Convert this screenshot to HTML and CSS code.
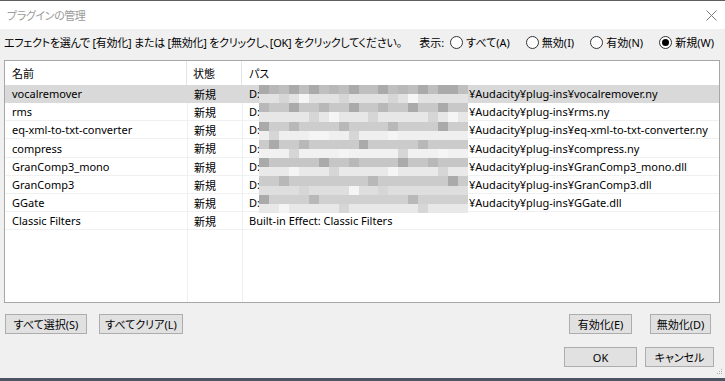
FILE: index.html
```html
<!DOCTYPE html>
<html lang="ja">
<head>
<meta charset="utf-8">
<title>プラグインの管理</title>
<link rel="stylesheet" href="styles.css">
</head>
<body>
<div class="window">
  <div class="titlebar">
    <span class="title">プラグインの管理</span>
    <svg class="close" width="11" height="11" viewBox="0 0 11 11"><path d="M0.5 0.5 L10.5 10.5 M10.5 0.5 L0.5 10.5" stroke="#7a7a7a" stroke-width="1" fill="none"/></svg>
  </div>
  <div class="content">
    <div class="topbar">
      <span class="hint">エフェクトを選んで [有効化] または [無効化] をクリックし、[OK] をクリックしてください。</span>
      <div class="filter">
        <span class="flabel">表示:</span>
        <span class="radio"><span class="circle"></span>すべて(A)</span>
        <span class="radio"><span class="circle"></span>無効(I)</span>
        <span class="radio"><span class="circle"></span>有効(N)</span>
        <span class="radio on"><span class="circle"></span>新規(W)</span>
      </div>
    </div>
    <div class="list">
      <div class="row head"><div class="c name">名前</div><div class="c state">状態</div><div class="c path">パス</div></div>
      <div class="row sel"><div class="c name">vocalremover</div><div class="c state">新規</div><div class="c path"><span class="drive">D:</span>¥Audacity¥plug-ins¥vocalremover.ny</div></div>
      <div class="row"><div class="c name">rms</div><div class="c state">新規</div><div class="c path"><span class="drive">D:</span>¥Audacity¥plug-ins¥rms.ny</div></div>
      <div class="row"><div class="c name">eq-xml-to-txt-converter</div><div class="c state">新規</div><div class="c path"><span class="drive">D:</span>¥Audacity¥plug-ins¥eq-xml-to-txt-converter.ny</div></div>
      <div class="row tall"><div class="c name">compress</div><div class="c state">新規</div><div class="c path"><span class="drive">D:</span>¥Audacity¥plug-ins¥compress.ny</div></div>
      <div class="row"><div class="c name">GranComp3_mono</div><div class="c state">新規</div><div class="c path"><span class="drive">D:</span>¥Audacity¥plug-ins¥GranComp3_mono.dll</div></div>
      <div class="row"><div class="c name">GranComp3</div><div class="c state">新規</div><div class="c path"><span class="drive">D:</span>¥Audacity¥plug-ins¥GranComp3.dll</div></div>
      <div class="row"><div class="c name">GGate</div><div class="c state">新規</div><div class="c path"><span class="drive">D:</span>¥Audacity¥plug-ins¥GGate.dll</div></div>
      <div class="row"><div class="c name">Classic Filters</div><div class="c state">新規</div><div class="c path">Built-in Effect: Classic Filters</div></div>
      <svg class="mosaic" width="209" height="128" viewBox="0 0 21 14" preserveAspectRatio="none" shape-rendering="crispEdges">
        <rect x="0" y="0" width="21" height="1" fill="#bfbfbf"/>
        <rect x="0" y="1" width="21" height="1" fill="#e2e2e2"/>
        <rect x="0" y="2" width="21" height="1" fill="#c8c8c8"/>
        <rect x="0" y="3" width="21" height="1" fill="#e7e7e7"/>
        <rect x="0" y="4" width="21" height="1" fill="#cdcdcd"/>
        <rect x="0" y="5" width="21" height="1" fill="#efefef"/>
        <rect x="0" y="6" width="21" height="1" fill="#cbcbcb"/>
        <rect x="0" y="7" width="21" height="1" fill="#f1f1f1"/>
        <rect x="0" y="8" width="21" height="1" fill="#c6c6c6"/>
        <rect x="0" y="9" width="21" height="1" fill="#e9e9e9"/>
        <rect x="0" y="10" width="21" height="1" fill="#cbcbcb"/>
        <rect x="0" y="11" width="21" height="1" fill="#dedede"/>
        <rect x="0" y="12" width="21" height="1" fill="#d0d0d0"/>
        <rect x="0" y="13" width="21" height="1" fill="#e8e8e8"/>
        <g fill="#aaaaaa">
          <rect x="0" y="0" width="1" height="1"/><rect x="3" y="0" width="1" height="1"/><rect x="5" y="0" width="1" height="1"/><rect x="9" y="0" width="1" height="1"/><rect x="12" y="0" width="1" height="1"/><rect x="16" y="0" width="1" height="1"/><rect x="18" y="0" width="2" height="1"/>
          <rect x="3" y="2" width="1" height="1"/><rect x="9" y="2" width="1" height="1"/><rect x="15" y="2" width="1" height="1"/><rect x="18" y="2" width="1" height="1"/>
          <rect x="0" y="4" width="1" height="1"/><rect x="18" y="4" width="1" height="1"/>
          <rect x="1" y="6" width="1" height="1"/><rect x="10" y="6" width="1" height="1"/>
          <rect x="0" y="8" width="1" height="1"/><rect x="6" y="8" width="1" height="1"/><rect x="14" y="8" width="1" height="1"/>
          <rect x="0" y="12" width="1" height="1"/><rect x="19" y="10" width="1" height="1"/>
        </g>
        <g fill="#b8b8b8">
          <rect x="1" y="0" width="1" height="1"/><rect x="7" y="0" width="1" height="1"/><rect x="14" y="0" width="1" height="1"/>
          <rect x="0" y="2" width="1" height="1"/><rect x="6" y="2" width="1" height="1"/><rect x="12" y="2" width="1" height="1"/>
          <rect x="3" y="4" width="1" height="1"/><rect x="8" y="4" width="1" height="1"/><rect x="13" y="4" width="1" height="1"/>
          <rect x="4" y="6" width="1" height="1"/><rect x="16" y="6" width="1" height="1"/>
          <rect x="9" y="8" width="1" height="1"/><rect x="17" y="8" width="1" height="1"/>
          <rect x="2" y="10" width="1" height="1"/><rect x="11" y="10" width="1" height="1"/>
          <rect x="5" y="12" width="1" height="1"/><rect x="15" y="12" width="1" height="1"/>
        </g>
        <g fill="#d6d6d6">
          <rect x="2" y="1" width="1" height="1"/><rect x="8" y="1" width="1" height="1"/><rect x="13" y="1" width="1" height="1"/>
          <rect x="5" y="3" width="1" height="1"/><rect x="11" y="3" width="1" height="1"/><rect x="17" y="3" width="1" height="1"/>
          <rect x="1" y="5" width="1" height="1"/><rect x="9" y="5" width="1" height="1"/>
          <rect x="3" y="7" width="1" height="1"/><rect x="14" y="7" width="1" height="1"/>
          <rect x="7" y="9" width="1" height="1"/><rect x="18" y="9" width="1" height="1"/>
          <rect x="4" y="11" width="1" height="1"/><rect x="12" y="11" width="1" height="1"/>
          <rect x="8" y="13" width="1" height="1"/><rect x="16" y="13" width="1" height="1"/>
        </g>
        <g fill="#f5f5f5">
          <rect x="4" y="1" width="1" height="1"/><rect x="15" y="1" width="1" height="1"/>
          <rect x="7" y="3" width="1" height="1"/><rect x="19" y="3" width="1" height="1"/>
          <rect x="5" y="5" width="2" height="1"/><rect x="13" y="5" width="1" height="1"/>
          <rect x="8" y="7" width="1" height="1"/><rect x="18" y="7" width="1" height="1"/>
          <rect x="3" y="9" width="1" height="1"/><rect x="13" y="9" width="1" height="1"/>
          <rect x="9" y="11" width="1" height="1"/><rect x="2" y="13" width="1" height="1"/>
        </g>
      </svg>
    </div>
    <div class="actions">
      <div class="group left">
        <button class="btn w-sel">すべて選択(S)</button>
        <button class="btn w-clr">すべてクリア(L)</button>
      </div>
      <div class="group right">
        <button class="btn w-en">有効化(E)</button>
        <button class="btn w-dis">無効化(D)</button>
      </div>
    </div>
    <div class="dialog-buttons">
      <button class="btn w-ok">OK</button>
      <button class="btn w-cancel">キャンセル</button>
    </div>
  </div>
  <svg class="grip" width="7" height="7" viewBox="0 0 7 7" shape-rendering="crispEdges">
    <g fill="#b0b0b0"><rect x="5" y="0" width="1" height="1"/><rect x="3" y="2" width="1" height="1"/><rect x="5" y="2" width="1" height="1"/><rect x="1" y="4" width="1" height="1"/><rect x="3" y="4" width="1" height="1"/><rect x="5" y="4" width="1" height="1"/></g>
  </svg>
</div>
</body>
</html>
```

FILE: styles.css
```css
* { box-sizing: border-box; }
html, body { margin: 0; padding: 0; }
body {
  width: 725px;
  height: 381px;
  overflow: hidden;
  background: #f0f0f0;
  font-family: "Noto Sans", "Noto Sans CJK JP", sans-serif;
  font-size: 11px;
  font-feature-settings: "palt";
  color: #000;
}
.window {
  position: relative;
  width: 725px;
  height: 381px;
  display: flex;
  flex-direction: column;
  border-top: 1px solid #5f5f5f;
  border-bottom: 3px solid #4d5562;
  background: #f0f0f0;
}
.titlebar {
  height: 28px;
  flex: none;
  background: #fff;
  display: flex;
  align-items: center;
  justify-content: space-between;
  padding: 0 8px 0 7px;
}
.title { color: #9b9b9b; font-size: 11px; line-height: 1; letter-spacing: -0.4px; }
.close { display: block; margin-top: 1px; }
.content {
  flex: 1;
  display: flex;
  flex-direction: column;
  padding: 0 5px 0 4px;
}
.topbar {
  height: 26px;
  display: flex;
  align-items: center;
  justify-content: space-between;
  white-space: nowrap;
}
.hint { line-height: 1; letter-spacing: -0.25px; }
.filter { display: flex; align-items: center; padding-right: 6px; }
.flabel { margin-right: 6px; }
.radio { display: flex; align-items: center; margin-left: 16px; }
.flabel + .radio { margin-left: 0; }
.circle {
  width: 13px;
  height: 13px;
  border: 1px solid #333;
  border-radius: 50%;
  background: #fff;
  margin-right: 3px;
  position: relative;
}
.radio.on .circle::after {
  content: "";
  position: absolute;
  left: 2px; top: 2px;
  width: 7px; height: 7px;
  border-radius: 50%;
  background: #000;
}
.list {
  position: relative;
  margin-top: 5px;
  height: 243px;
  border: 1px solid #a7a7a7;
  background:
    linear-gradient(to right, transparent 182px, #ebf0f6 182px, #ebf0f6 183px, transparent 183px, transparent 237px, #ebf0f6 237px, #ebf0f6 238px, transparent 238px),
    #fff;
  overflow: hidden;
}
.row {
  display: flex;
  height: 18px;
  align-items: center;
  border-bottom: 1px solid #f0f0f0;
  white-space: nowrap;
}
.row.tall { height: 19px; }
.row.head { height: 24px; border-bottom: none; background: #fff; }
.row.sel { background: #d9d9d9; border-bottom-color: #d9d9d9; }
.c { padding-left: 7px; height: 100%; display: flex; align-items: center; }
.name { width: 182px; }
.state { width: 55px; }
.head .name, .head .state { border-right: 1px solid #e5e5e5; }
.head .state { width: 56px; margin-left: -1px; }
.path { flex: 1; }
.drive { display: inline-block; width: 220px; }
.mosaic { position: absolute; left: 254px; top: 24px; display: block; }
.actions {
  display: flex;
  justify-content: space-between;
  margin-top: 11px;
  padding-left: 1px;
  padding-right: 9px;
}
.group { display: flex; }
.left { gap: 12px; }
.right { gap: 18px; }
.btn {
  height: 20px;
  padding: 0;
  border: 1px solid #adadad;
  background: #e1e1e1;
  font-family: inherit;
  font-size: 11px;
  font-feature-settings: "palt";
  color: #000;
  line-height: 1;
}
.w-sel { width: 82px; }
.w-clr { width: 84px; }
.w-en { width: 63px; }
.w-dis { width: 61px; }
.w-ok { width: 73px; }
.w-cancel { width: 69px; }
.dialog-buttons {
  display: flex;
  justify-content: flex-end;
  gap: 8px;
  margin-top: 13px;
  padding-right: 6px;
}
.grip { position: absolute; right: 2px; bottom: 2px; }
```
